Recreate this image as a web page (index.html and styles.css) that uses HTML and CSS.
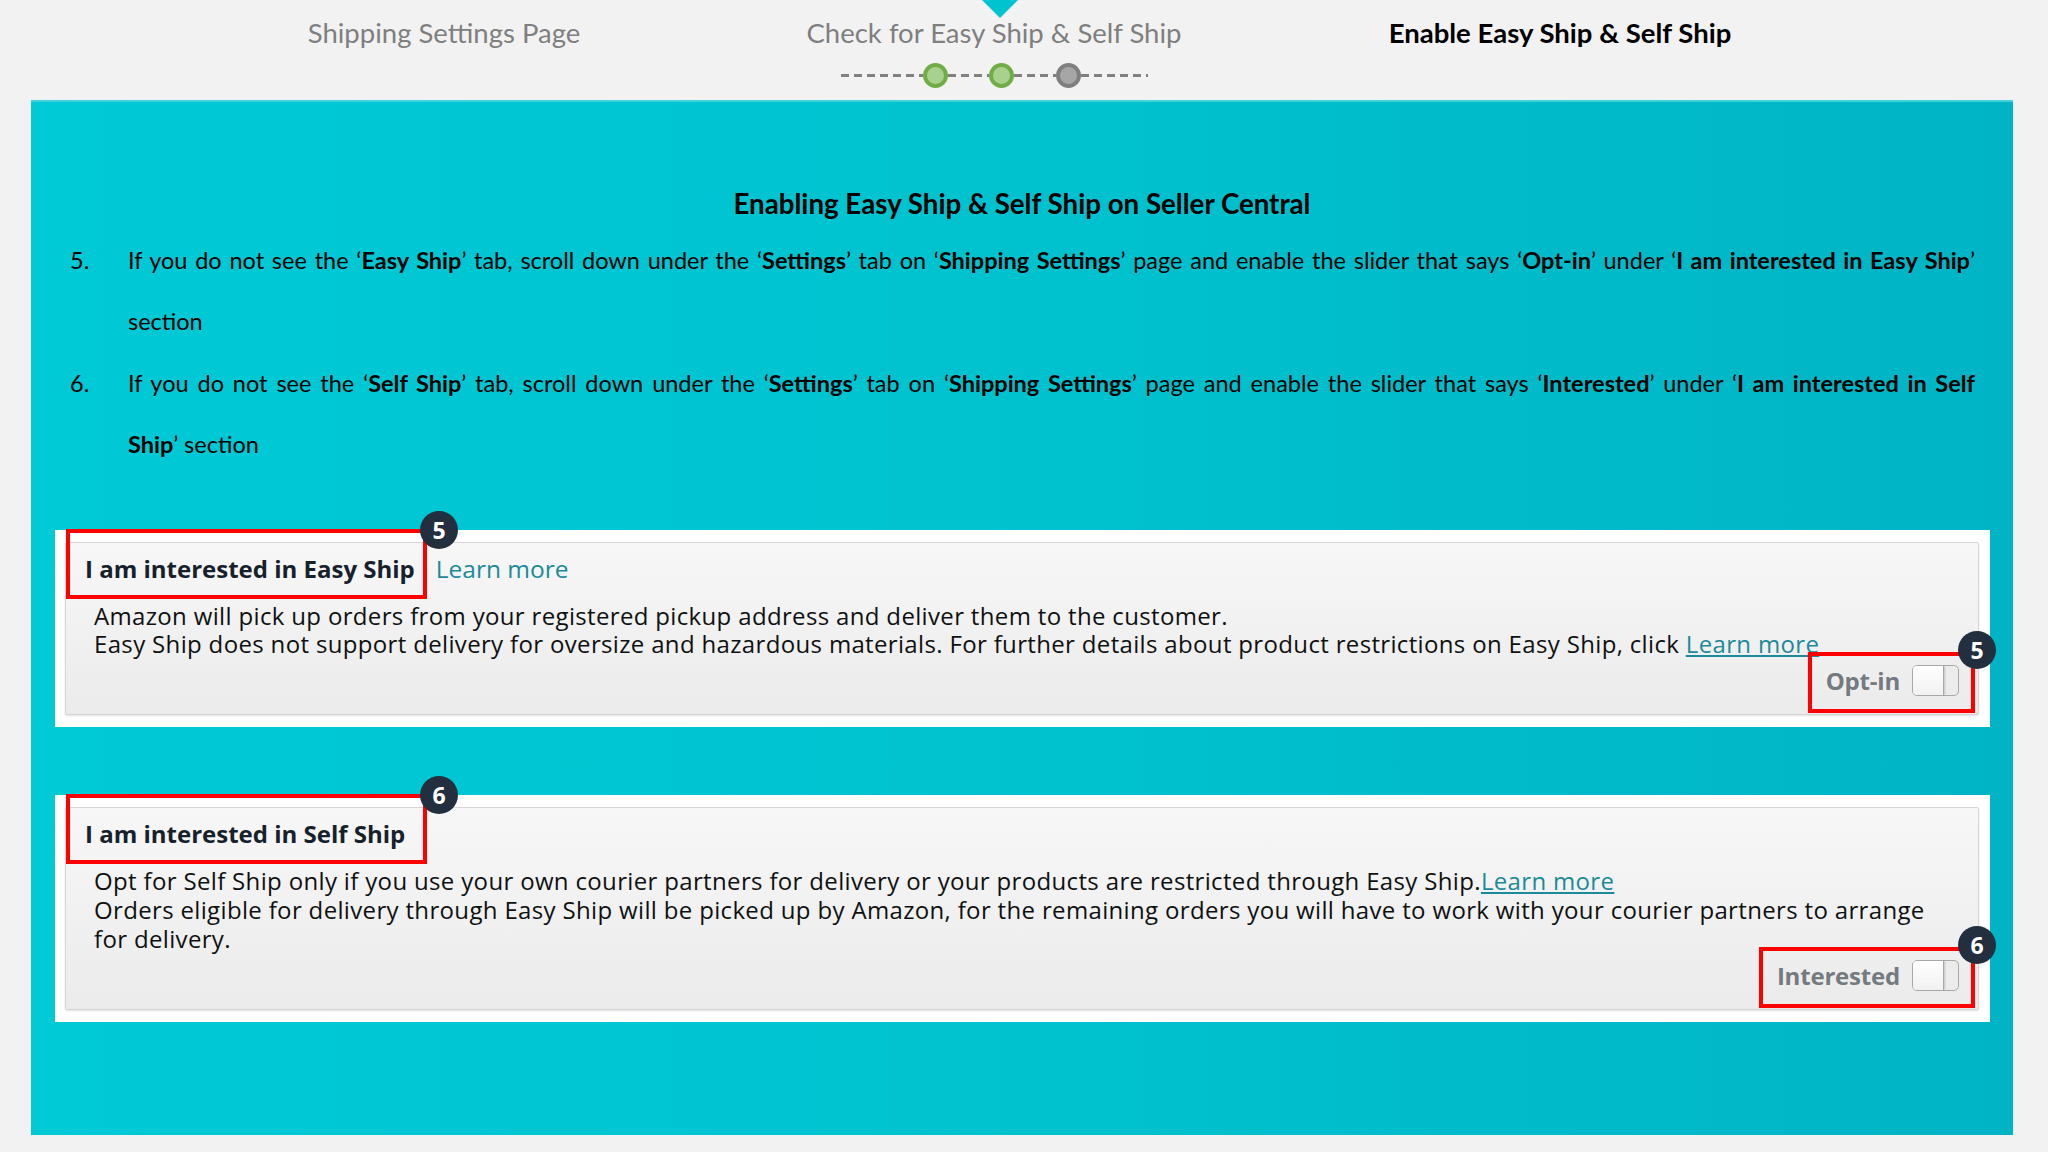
FILE: index.html
```html
<!DOCTYPE html>
<html lang="en">
<head>
<meta charset="utf-8">
<title>Enable Easy Ship &amp; Self Ship</title>
<link rel="stylesheet" href="styles.css">
</head>
<body>
<div class="page">
  <header class="steps">
    <div class="marker"></div>
    <div class="step s1"><span class="label">Shipping Settings Page</span></div>
    <div class="step s2">
      <span class="label">Check for Easy Ship &amp; Self Ship</span>
      <div class="track">
        <span class="dash d1"></span><span class="dot done"></span><span class="dash d2"></span><span class="dot done"></span><span class="dash d3"></span><span class="dot todo"></span><span class="dash d4"></span>
      </div>
    </div>
    <div class="step s3"><span class="label active">Enable Easy Ship &amp; Self Ship</span></div>
  </header>

  <section class="panel">
    <h1 class="title">Enabling Easy Ship &amp; Self Ship on Seller Central</h1>
    <ol class="list">
      <li class="item">
        <span class="num">5.</span>
        <div class="body">
          <div class="ln j">If you do not see the ‘<b>Easy Ship</b>’ tab, scroll down under the ‘<b>Settings</b>’ tab on ‘<b>Shipping Settings</b>’ page and enable the slider that says ‘<b>Opt-in</b>’ under ‘<b>I am interested in Easy Ship</b>’</div>
          <div class="ln">section</div>
        </div>
      </li>
      <li class="item">
        <span class="num">6.</span>
        <div class="body">
          <div class="ln j">If you do not see the ‘<b>Self Ship</b>’ tab, scroll down under the ‘<b>Settings</b>’ tab on ‘<b>Shipping Settings</b>’ page and enable the slider that says ‘<b>Interested</b>’ under ‘<b>I am interested in Self</b></div>
          <div class="ln"><b>Ship</b>’ section</div>
        </div>
      </li>
    </ol>

    <div class="cards">
      <div class="card">
        <div class="inner">
          <div class="head">
            <span class="mark">I am interested in Easy Ship<span class="hl"><span class="badge">5</span></span></span>
            <a class="link">Learn more</a>
          </div>
          <div class="desc">
            <div class="dl">Amazon will pick up orders from your registered pickup address and deliver them to the customer.</div>
            <div class="dl">Easy Ship does not support delivery for oversize and hazardous materials. For further details about product restrictions on Easy Ship, click <a>Learn more</a></div>
          </div>
          <div class="actions">
            <div class="act">
              <span class="act-label">Opt-in</span>
              <span class="toggle"><span class="knob"></span></span>
              <span class="hl"><span class="badge">5</span></span>
            </div>
          </div>
        </div>
      </div>

      <div class="card">
        <div class="inner">
          <div class="head">
            <span class="mark">I am interested in Self Ship<span class="hl"><span class="badge">6</span></span></span>
          </div>
          <div class="desc">
            <div class="dl">Opt for Self Ship only if you use your own courier partners for delivery or your products are restricted through Easy Ship.<a>Learn more</a></div>
            <div class="dl">Orders eligible for delivery through Easy Ship will be picked up by Amazon, for the remaining orders you will have to work with your courier partners to arrange</div>
            <div class="dl">for delivery.</div>
          </div>
          <div class="actions">
            <div class="act">
              <span class="act-label">Interested</span>
              <span class="toggle"><span class="knob"></span></span>
              <span class="hl"><span class="badge">6</span></span>
            </div>
          </div>
        </div>
      </div>
    </div>
  </section>
</div>
</body>
</html>
```

FILE: styles.css
```css
html, body {
  margin: 0;
  padding: 0;
}
body {
  width: 2048px;
  height: 1152px;
  overflow: hidden;
  background: #f2f2f2;
  font-family: Lato, "Liberation Sans", sans-serif;
}

/* ---------- step header ---------- */
.steps {
  position: relative;
  height: 100px;
  box-sizing: border-box;
  padding-top: 17px;
  padding-left: 169px;
  display: flex;
}
.marker {
  position: absolute;
  left: 982px;
  top: 0;
  width: 0;
  height: 0;
  border-left: 18px solid transparent;
  border-right: 18px solid transparent;
  border-top: 18px solid #00c3d0;
}
.step {
  width: 550px;
  display: flex;
  flex-direction: column;
  align-items: center;
}
.s3 { margin-left: 16px; }
.label {
  font-size: 27.5px;
  line-height: 32px;
  color: #7f7f7f;
  white-space: nowrap;
}
.label.active {
  color: #000;
  font-weight: 700;
}
.track {
  display: flex;
  align-items: center;
  height: 25px;
  margin-top: 14px;
}
.dash {
  height: 3px;
  background: repeating-linear-gradient(90deg, #808080 0 8px, transparent 8px 13px);
}
.d1 { width: 82px; }
.d2 { width: 41px; }
.d3 { width: 42px; }
.d4 { width: 67px; }
.dot {
  width: 25px;
  height: 25px;
  box-sizing: border-box;
  border-radius: 50%;
  border: 4px solid #70ad47;
  background: #a9d18e;
}
.dot.todo {
  border-color: #7f7f7f;
  background: #a6a6a6;
}

/* ---------- teal panel ---------- */
.panel {
  margin-left: 31px;
  width: 1982px;
  height: 1035px;
  box-sizing: border-box;
  border-top: 2px solid #3fd2dc;
  background: linear-gradient(90deg, #00cad6 0%, #00c2cf 50%, #00b4c5 100%);
  padding-top: 86px;
  overflow: hidden;
}
.title {
  margin: 0 0 10px;
  text-align: center;
  font-size: 27.7px;
  line-height: 32px;
  font-weight: 700;
  color: #000;
}
.list {
  margin: 0 38px 0 39px;
  padding: 0;
  list-style: none;
  font-size: 23.5px;
  line-height: 61.4px;
  color: #000;
}
.item { display: flex; }
.num { width: 58px; flex: none; }
.body { flex: 1; min-width: 0; }
.j {
  text-align: justify;
  text-align-last: justify;
}

/* ---------- cards ---------- */
.cards {
  margin: 54px 23px 0 24px;
  display: flex;
  flex-direction: column;
  gap: 68px;
}
.card {
  background: #fff;
  padding: 12px 11px 12px 10px;
}
.inner {
  border: 1px solid #d6d6d6;
  border-radius: 2px;
  background: linear-gradient(#f7f7f7, #ebebeb);
  box-shadow: 0 1px 2px rgba(0, 0, 0, 0.12);
  padding: 10px 19px 18px 19px;
  font-family: "Open Sans", "Noto Sans", sans-serif;
  color: #0f1111;
}
.head {
  height: 32px;
  display: flex;
  align-items: baseline;
  font-size: 24px;
  line-height: 32px;
  white-space: nowrap;
}
.mark {
  position: relative;
  font-weight: 700;
  color: #16212c;
}
.link {
  margin-left: 21px;
  font-size: 24.5px;
  color: #1b8a9a;
}
.desc {
  margin: 17px 0 0 9px;
  font-size: 24px;
  letter-spacing: 0.34px;
  line-height: 28.6px;
  white-space: nowrap;
}
.dl {
  height: 28.6px;
}
.desc a {
  color: #1b8a9a;
  text-decoration: underline;
}
.actions {
  margin-top: 6.5px;
  height: 31px;
  display: flex;
  justify-content: flex-end;
  align-items: center;
}
.act {
  position: relative;
  display: flex;
  align-items: center;
  gap: 12px;
}
.act-label {
  font-size: 24px;
  letter-spacing: -0.2px;
  line-height: 31px;
  font-weight: 700;
  color: #737a80;
}
.toggle {
  width: 47px;
  height: 31px;
  box-sizing: border-box;
  border: 1px solid #a8a8a8;
  border-radius: 5px;
  background: #ececec;
  display: flex;
  overflow: hidden;
}
.knob {
  width: 30px;
  height: 100%;
  background: linear-gradient(#ffffff, #f1f1f1);
  border-right: 1px solid #a8a8a8;
  box-shadow: 1px 0 2px rgba(0, 0, 0, 0.18);
}

/* ---------- annotations ---------- */
.hl {
  position: absolute;
  box-sizing: border-box;
  border: 4px solid #ff0000;
}
.mark .hl {
  left: -19px;
  top: -24px;
  width: 361px;
  height: 70px;
}
.act .hl {
  top: -13px;
  bottom: -17px;
  left: -18px;
  right: -16px;
}
.badge {
  position: absolute;
  width: 38px;
  height: 38px;
  border-radius: 50%;
  background: #232f3e;
  color: #fff;
  font-family: "Open Sans", sans-serif;
  font-weight: 700;
  font-size: 23px;
  line-height: 38px;
  text-align: center;
}
.mark .badge {
  left: 350px;
  top: -22px;
}
.act .badge {
  right: -25px;
  top: -25px;
}
```
